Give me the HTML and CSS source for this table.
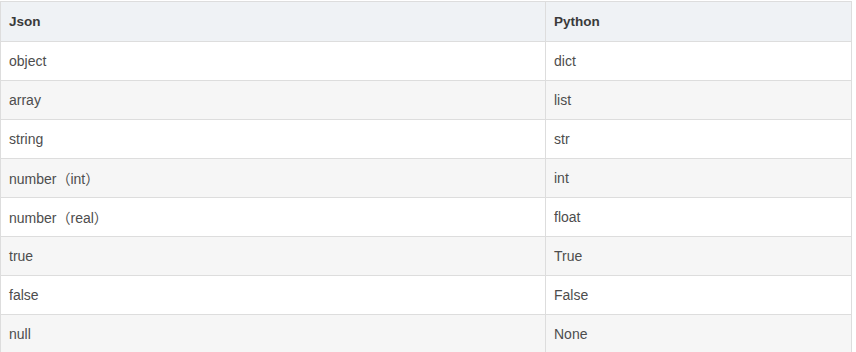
FILE: index.html
```html
<!DOCTYPE html>
<html lang="zh">
<head>
<meta charset="utf-8">
<link rel="stylesheet" href="styles.css">
</head>
<body>
<table class="map-table">
  <thead>
    <tr><th class="col-json">Json</th><th>Python</th></tr>
  </thead>
  <tbody>
    <tr><td>object</td><td>dict</td></tr>
    <tr><td>array</td><td>list</td></tr>
    <tr><td>string</td><td>str</td></tr>
    <tr><td>number（int）</td><td>int</td></tr>
    <tr><td>number（real）</td><td>float</td></tr>
    <tr><td>true</td><td>True</td></tr>
    <tr><td>false</td><td>False</td></tr>
    <tr><td>null</td><td>None</td></tr>
  </tbody>
</table>
</body>
</html>
```
FILE: styles.css
```css
html, body {
  margin: 0;
  padding: 0;
  background: #fff;
}
body {
  padding-top: 1px;
  font-family: "Liberation Sans", "Noto Sans CJK SC", sans-serif;
  font-size: 14px;
  color: #4d4d4d;
}
.map-table {
  border-collapse: collapse;
  width: 852px;
  table-layout: fixed;
}
.map-table th,
.map-table td {
  border: 1px solid #ddd;
  padding: 0 8px;
  text-align: left;
  box-sizing: border-box;
}
.map-table th {
  height: 40px;
  background: #eff2f5;
  font-size: 13.5px;
  font-weight: bold;
  color: #3a3a3a;
}
.map-table .col-json {
  width: 545px;
}
.map-table td {
  height: 39px;
}
.map-table tbody tr:nth-child(even) td {
  background: #f6f6f6;
}
```
